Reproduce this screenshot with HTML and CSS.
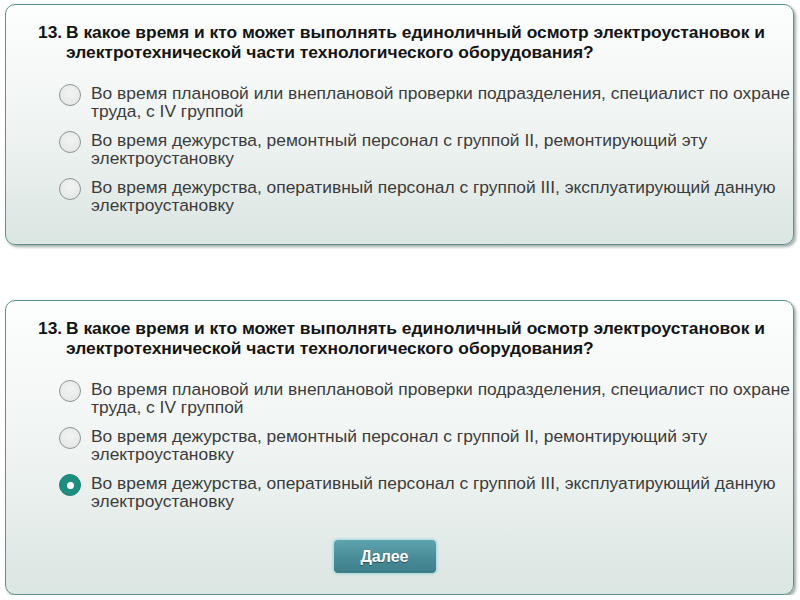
FILE: index.html
```html
<!DOCTYPE html>
<html lang="ru">
<head>
<meta charset="utf-8">
<title>Вопрос 13</title>
<link rel="stylesheet" href="styles.css">
</head>
<body>
<div class="page">
  <section class="card">
    <div class="question">
      <span class="num">13.</span>
      <span class="qtext">В какое время и кто может выполнять единоличный осмотр электроустановок и электротехнической части технологического оборудования?</span>
    </div>
    <ul class="options">
      <li class="option"><span class="radio"></span><span class="otext">Во время плановой или внеплановой проверки подразделения, специалист по охране труда, с IV группой</span></li>
      <li class="option"><span class="radio"></span><span class="otext">Во время дежурства, ремонтный персонал с группой II, ремонтирующий эту электроустановку</span></li>
      <li class="option"><span class="radio"></span><span class="otext">Во время дежурства, оперативный персонал с группой III, эксплуатирующий данную электроустановку</span></li>
    </ul>
  </section>

  <section class="card card-second">
    <div class="question">
      <span class="num">13.</span>
      <span class="qtext">В какое время и кто может выполнять единоличный осмотр электроустановок и электротехнической части технологического оборудования?</span>
    </div>
    <ul class="options">
      <li class="option"><span class="radio"></span><span class="otext">Во время плановой или внеплановой проверки подразделения, специалист по охране труда, с IV группой</span></li>
      <li class="option"><span class="radio"></span><span class="otext">Во время дежурства, ремонтный персонал с группой II, ремонтирующий эту электроустановку</span></li>
      <li class="option"><span class="radio radio-checked"></span><span class="otext">Во время дежурства, оперативный персонал с группой III, эксплуатирующий данную электроустановку</span></li>
    </ul>
    <div class="actions">
      <button class="btn" type="button">Далее</button>
    </div>
  </section>
</div>
</body>
</html>
```

FILE: styles.css
```css
html, body {
  margin: 0;
  padding: 0;
  background: #ffffff;
}

body {
  font-family: "Liberation Sans", Arial, sans-serif;
  color: #333;
}

.page {
  padding: 4px 6px 0 5px;
  display: flex;
  flex-direction: column;
  gap: 55px;
}

.card {
  border: 1px solid #5f918a;
  border-radius: 10px;
  background: linear-gradient(to bottom, #fdfefe 0%, #eef3f1 55%, #dbe5e1 100%);
  box-shadow: 2px 2px 3px rgba(40, 70, 65, 0.45);
  padding: 17px 2px 30px 32px;
}

.card-second {
  padding-bottom: 20px;
}

.question {
  display: flex;
  font-size: 17.4px;
  line-height: 20px;
  font-weight: bold;
  color: #141414;
}

.num {
  flex: 0 0 28px;
}

.qtext {
  flex: 1;
}

.options {
  list-style: none;
  margin: 22px 0 0 21px;
  padding: 0;
  display: flex;
  flex-direction: column;
  gap: 11px;
}

.option {
  display: flex;
  align-items: flex-start;
  gap: 10px;
  font-size: 17.4px;
  line-height: 18px;
  color: #3c3c3c;
}

.radio {
  flex: 0 0 auto;
  width: 20px;
  height: 20px;
  margin-top: 0;
  border-radius: 50%;
  border: 1px solid #8d9593;
  background: radial-gradient(circle at 50% 40%, #f2f3f3 0%, #e2e5e4 100%);
  box-sizing: content-box;
  position: relative;
}

.radio-checked {
  border-color: #1d8277;
  background: #1f8c80;
}

.radio-checked::after {
  content: "";
  position: absolute;
  left: 50%;
  top: 50%;
  width: 7px;
  height: 7px;
  margin: -3.5px 0 0 -3.5px;
  border-radius: 50%;
  background: #ffffff;
}

.actions {
  display: flex;
  justify-content: center;
  margin-top: 29px;
  padding-right: 60px;
}

.btn {
  width: 104px;
  height: 35px;
  border: 1px solid #b9dde3;
  border-radius: 5px;
  background: linear-gradient(to bottom, #5ea4af 0%, #4a8e99 50%, #3d7e8a 100%);
  box-shadow: 0 0 2px rgba(120, 200, 210, 0.9);
  color: #ffffff;
  font-family: "Liberation Sans", Arial, sans-serif;
  font-size: 16px;
  font-weight: bold;
  text-shadow: 0 1px 1px rgba(0, 40, 50, 0.6);
  cursor: pointer;
}
```
